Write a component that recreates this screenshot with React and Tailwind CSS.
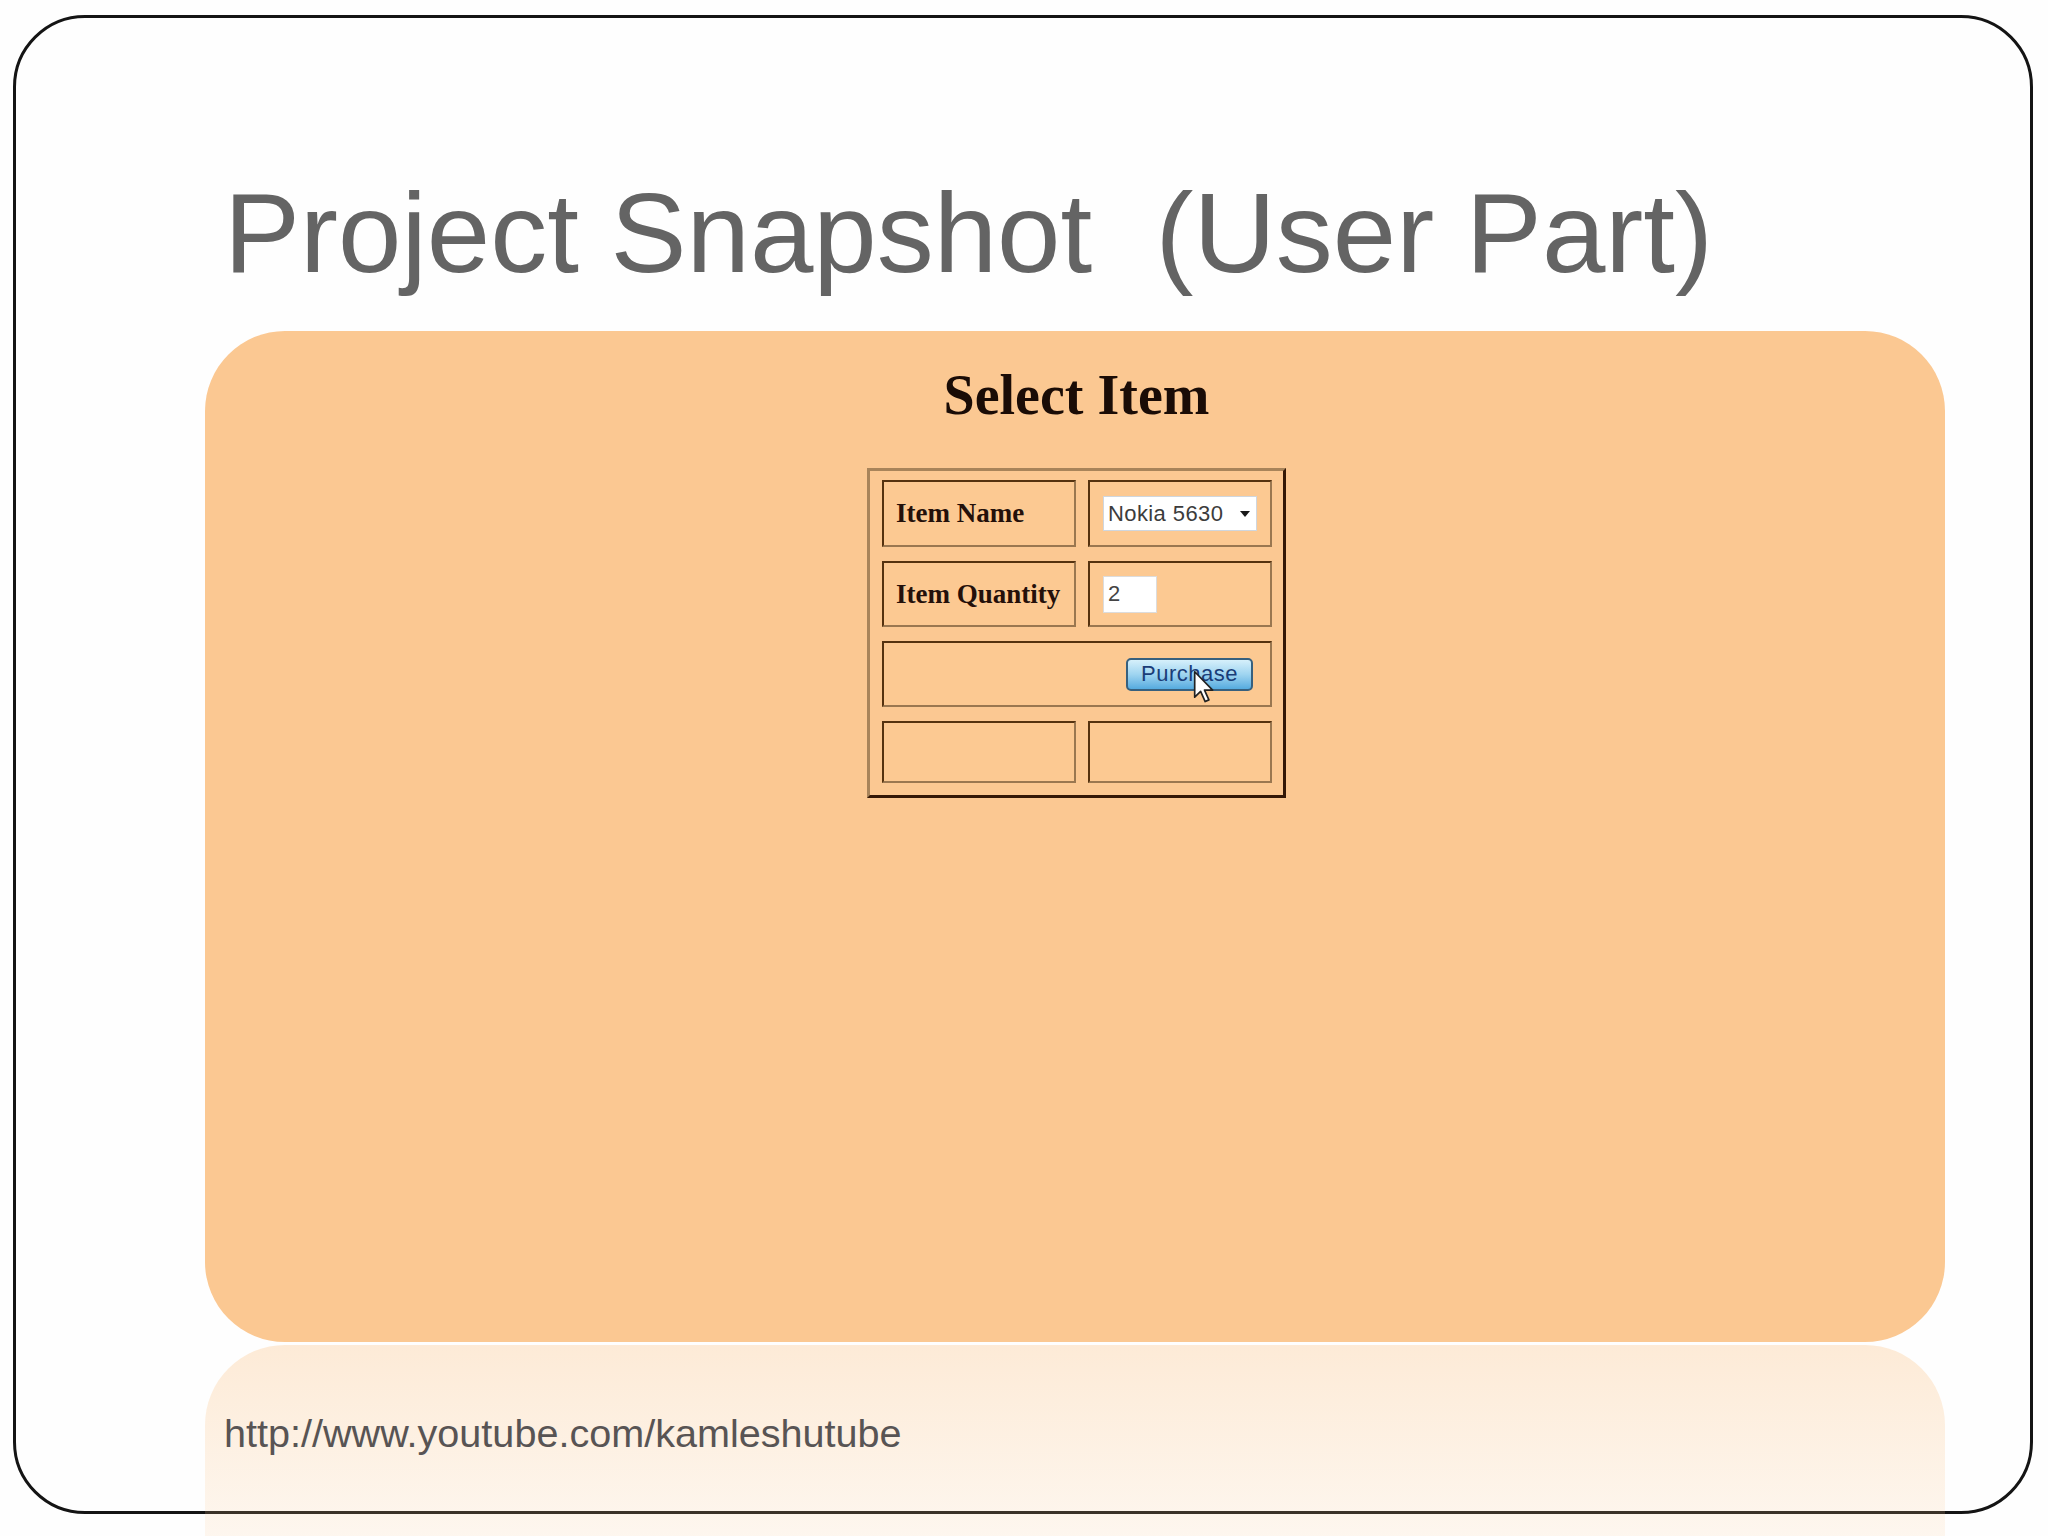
import React from "react";

const serif = "font-['Liberation_Serif','Times_New_Roman',serif]";

function Cell({ className = "", children }) {
  return (
    <div
      className={
        "border-2 border-t-[#55320f] border-l-[#55320f] border-b-[#9a7750] border-r-[#9a7750] bg-[#fcc992] " +
        className
      }
    >
      {children}
    </div>
  );
}

function Cursor() {
  return (
    <svg
      className="absolute left-[309px] top-[27px]"
      width="22"
      height="34"
      viewBox="0 0 13 20"
    >
      <path
        d="M1 1 L1 16 L4.5 12.6 L7.2 18.6 L9.4 17.6 L6.8 11.8 L11.6 11.8 Z"
        fill="#ffffff"
        stroke="#222222"
        strokeWidth="1"
        strokeLinejoin="round"
      />
    </svg>
  );
}

export default function App() {
  return (
    <div className="w-[2048px] h-[1536px] bg-[#fefefe] overflow-hidden pt-[15px] pl-[13px] font-['Liberation_Sans',Arial,sans-serif]">
      <div className="w-[2020px] h-[1499px] border-[3px] border-[#141414] rounded-[72px] flex flex-col">
        <div className="shrink-0 ml-[208px] mt-[158px] text-[114px] leading-none text-[#646464] whitespace-pre">
          {"Project Snapshot  (User Part)"}
        </div>

        <div className="shrink-0 mt-[41px] ml-[189px] w-[1740px] h-[1011px] rounded-[80px] bg-[#fbc892] flex flex-col items-center">
          <div
            className={
              serif +
              " mt-[36px] ml-[3px] text-[56px] leading-none font-bold text-[#1a0c06]"
            }
          >
            Select Item
          </div>

          <div className="mt-[45px] ml-[3px] w-[419px] border-[3px] border-t-[#a8845a] border-l-[#a8845a] border-b-[#341806] border-r-[#341806] pt-[9px] pl-[12px] pr-[11px] pb-[12px] grid grid-cols-[194px_184px] grid-rows-[67px_66px_66px_62px] gap-x-[12px] gap-y-[14px]">
            <Cell className="flex items-center pl-[12px]">
              <span className={serif + " text-[27px] leading-none font-bold text-[#24100a]"}>
                Item Name
              </span>
            </Cell>
            <Cell className="flex items-center pl-[13px]">
              <div className="w-[154px] h-[35px] bg-white border border-[#cfd6de] flex items-center pl-[4px] pr-[6px]">
                <span className="text-[22px] leading-none text-[#3c3c3c] tracking-[0.4px] flex-1">
                  Nokia 5630
                </span>
                <svg width="10" height="6" viewBox="0 0 10 6">
                  <path d="M0 0 H10 L5 6 Z" fill="#1a1a1a" />
                </svg>
              </div>
            </Cell>

            <Cell className="flex items-center pl-[12px]">
              <span className={serif + " text-[27px] leading-none font-bold text-[#24100a]"}>
                Item Quantity
              </span>
            </Cell>
            <Cell className="flex items-center pl-[13px]">
              <div className="w-[54px] h-[37px] bg-white border border-[#dcdcdc] flex items-center pl-[4px]">
                <span className="text-[22px] leading-none text-[#444444]">2</span>
              </div>
            </Cell>

            <Cell className="col-span-2 relative flex items-center justify-end pr-[17px]">
              <div className="w-[127px] h-[33px] rounded-[5px] border-2 border-[#37607e] bg-gradient-to-b from-[#d6f0fb] via-[#9ed4f0] to-[#55abdf] flex items-center justify-center">
                <span className="text-[22px] leading-none text-[#1a3d78] tracking-[0.5px]">
                  Purchase
                </span>
              </div>
              <Cursor />
            </Cell>

            <Cell />
            <Cell />
          </div>
        </div>

        <div className="shrink-0 mt-[3px] ml-[189px] w-[1740px] h-[191px] rounded-t-[80px] bg-gradient-to-b from-[rgba(251,200,145,0.36)] to-[rgba(251,200,145,0.14)] pl-[19px] pt-[69px]">
          <div className="text-[39.6px] leading-none text-[#585454]">
            http://www.youtube.com/kamleshutube
          </div>
        </div>
      </div>
    </div>
  );
}
